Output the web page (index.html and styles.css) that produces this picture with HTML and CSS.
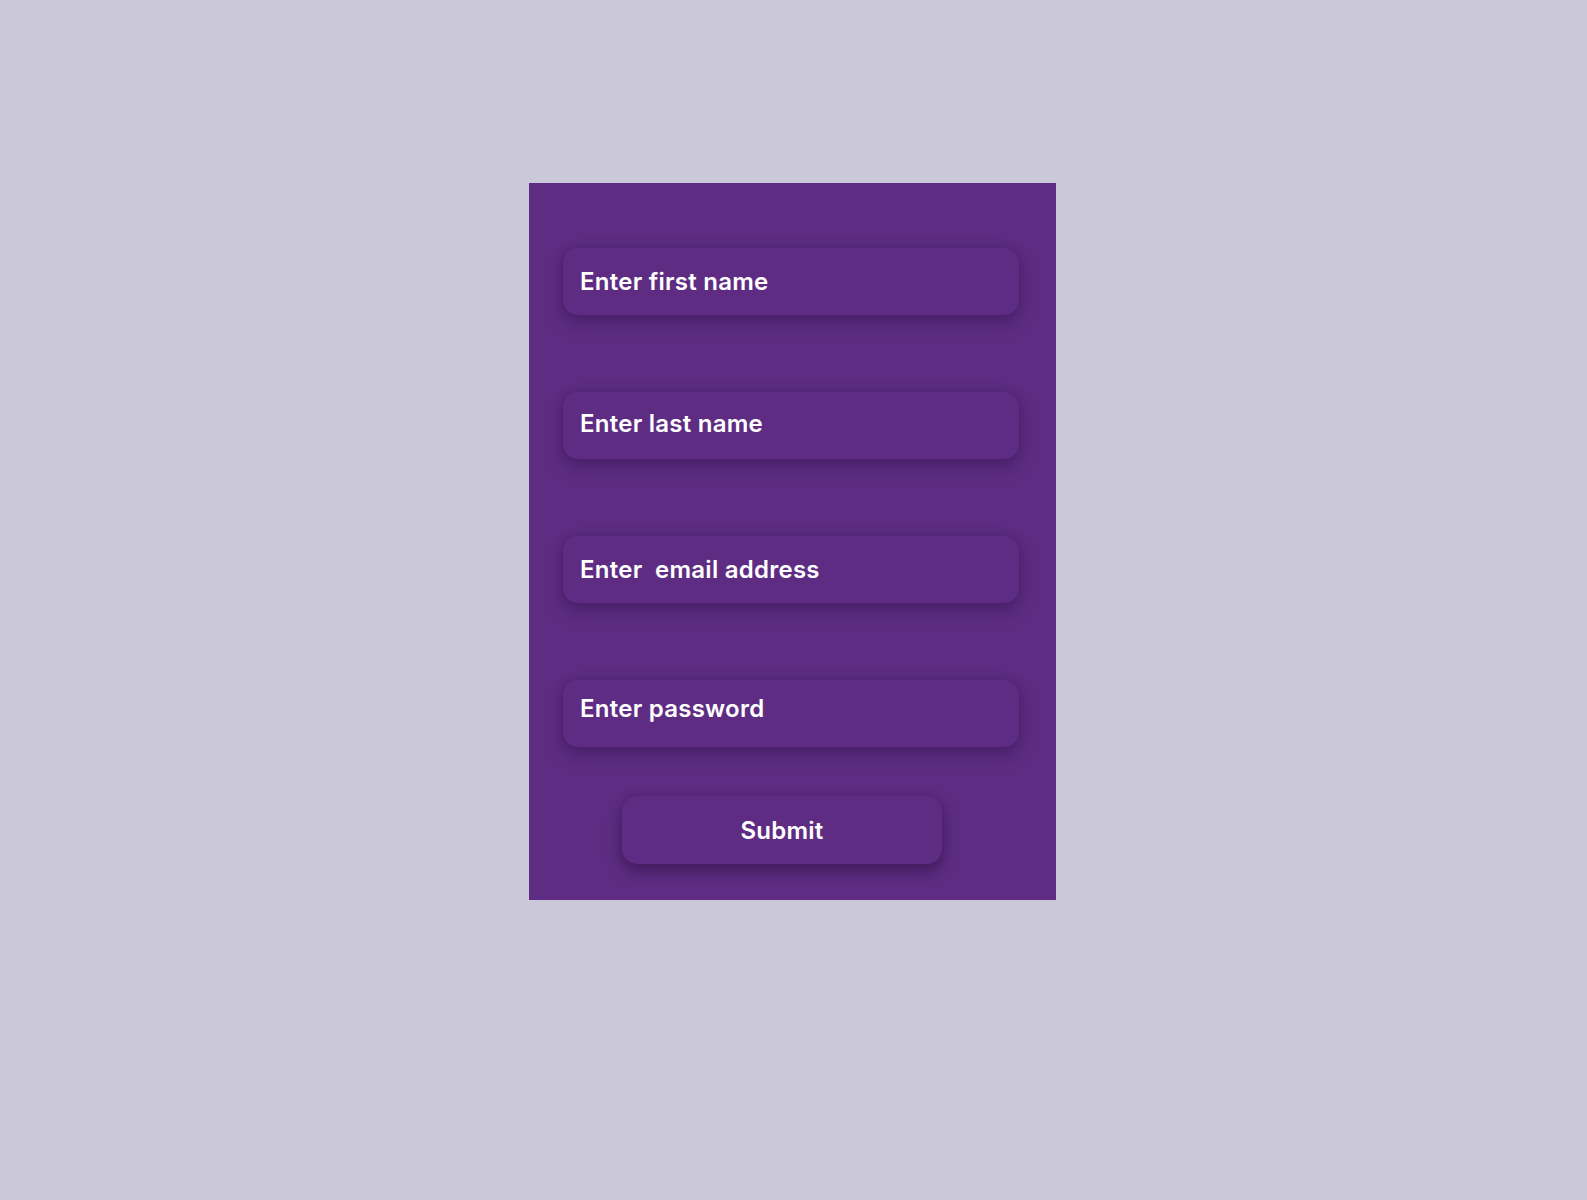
FILE: index.html
```html
<!DOCTYPE html>
<html lang="en">
<head>
<meta charset="utf-8">
<title>Sign up</title>
<link rel="stylesheet" href="styles.css">
</head>
<body>
  <main class="page">
    <form class="card">
      <input class="field" type="text" placeholder="Enter first name">
      <input class="field field--lift-s" type="text" placeholder="Enter last name">
      <input class="field" type="email" placeholder="Enter  email address">
      <input class="field field--lift-m" type="password" placeholder="Enter password">
      <button class="submit" type="button">Submit</button>
    </form>
  </main>
</body>
</html>
```

FILE: styles.css
```css
html, body {
  margin: 0;
  padding: 0;
  background: #cac8d9;
}

.page {
  display: flex;
  justify-content: center;
  padding: 183px 2px 0 0;
  min-height: 1200px;
  box-sizing: border-box;
}

.card {
  width: 527px;
  height: 717px;
  box-sizing: border-box;
  background: #5e2d83;
  padding: 65px 37px 37px 34px;
  display: flex;
  flex-direction: column;
  gap: 77px;
}

.field {
  display: block;
  width: 456px;
  height: 67px;
  flex: none;
  box-sizing: border-box;
  border: none;
  outline: none;
  border-radius: 15px;
  background: #5e2d83;
  padding: 0 17px;
  font-family: "Inter", "Open Sans", sans-serif;
  font-weight: 600;
  font-size: 24px;
  letter-spacing: 0.25px;
  color: #fff;
  box-shadow: 0 8px 18px rgba(35, 8, 55, 0.32), 0 0 10px rgba(35, 8, 55, 0.18);
}

.field--lift-s {
  padding-bottom: 5px;
}

.field--lift-m {
  padding-bottom: 10px;
}

.field::placeholder {
  color: #ffffff;
  opacity: 1;
}

.submit {
  flex: none;
  align-self: flex-start;
  margin-left: 59px;
  margin-top: -28px;
  width: 320px;
  height: 68px;
  border: none;
  border-radius: 15px;
  background: #5e2d83;
  color: #fff;
  font-family: "Inter", "Open Sans", sans-serif;
  font-weight: 600;
  font-size: 24px;
  letter-spacing: 0.25px;
  box-shadow: 0 8px 16px rgba(35, 8, 55, 0.45), 0 0 10px rgba(35, 8, 55, 0.15);
  cursor: pointer;
}
```
